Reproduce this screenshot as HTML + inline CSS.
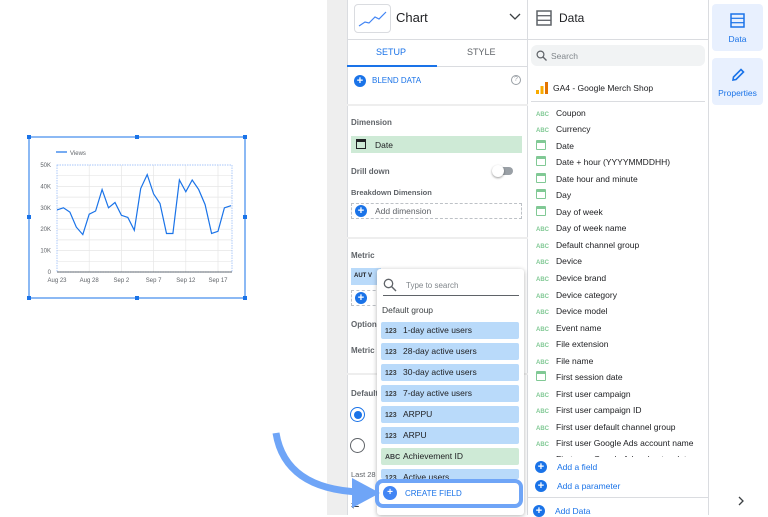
<!DOCTYPE html>
<html><head><meta charset="utf-8"><style>
*{margin:0;padding:0;box-sizing:border-box}
body{width:768px;height:515px;overflow:hidden;background:#fff;font-family:"Liberation Sans",Arial,sans-serif;position:relative;color:#202124}
.a{position:absolute}
.t{font-size:8.5px;color:#202124;white-space:nowrap}
.lbl{font-size:8px;color:#5f6368;font-weight:bold}
.plus{width:12px;height:12px;border-radius:50%;background:#1a73e8;color:#fff;font-size:11px;line-height:12px;text-align:center;font-weight:bold}
.row{position:absolute;left:536px;font-size:8.5px;color:#202124;white-space:nowrap;height:14px;line-height:14px}
.row i{display:inline-block;width:20px;font-style:normal;font-size:6px;color:#81c995;font-weight:bold}
.cal{display:inline-block;width:10px;height:10px;border:1.5px solid #81c995;border-top-width:3px;margin-right:10px;vertical-align:-1px;border-radius:1px}
.mi{position:absolute;left:381px;width:138px;height:17px;background:#b9dafa;border-radius:2px;font-size:8.5px;line-height:17px;white-space:nowrap}
.mi b{display:inline-block;width:22px;padding-left:4px;font-size:7px;color:#3c4043}
</style></head><body>
<!-- gray strip -->
<div class="a" style="left:327px;top:0;width:20px;height:515px;background:#eeeeee"></div>
<!-- chart -->
<svg class="a" style="left:0;top:0" width="327" height="515">
<rect x="29" y="137" width="216" height="161" fill="none" stroke="#1a73e8" stroke-width="1"/>
<g fill="#1a73e8"><rect x="27" y="135" width="4" height="4"/><rect x="135" y="135" width="4" height="4"/><rect x="243" y="135" width="4" height="4"/><rect x="27" y="215" width="4" height="4"/><rect x="243" y="215" width="4" height="4"/><rect x="27" y="296" width="4" height="4"/><rect x="135" y="296" width="4" height="4"/><rect x="243" y="296" width="4" height="4"/></g>
<line x1="56" y1="152" x2="67" y2="152" stroke="#1a73e8" stroke-width="1.2"/>
<text x="70" y="155" font-size="6" fill="#5f6368" font-family="Liberation Sans">Views</text>
<g stroke="#e6e6e6" stroke-width="0.7">
<line x1="57" y1="175.7" x2="232" y2="175.7"/><line x1="57" y1="186.4" x2="232" y2="186.4"/><line x1="57" y1="197.1" x2="232" y2="197.1"/><line x1="57" y1="207.8" x2="232" y2="207.8"/><line x1="57" y1="218.5" x2="232" y2="218.5"/><line x1="57" y1="229.2" x2="232" y2="229.2"/><line x1="57" y1="239.9" x2="232" y2="239.9"/><line x1="57" y1="250.6" x2="232" y2="250.6"/><line x1="57" y1="261.3" x2="232" y2="261.3"/>
<line x1="89.2" y1="165" x2="89.2" y2="272"/><line x1="121.4" y1="165" x2="121.4" y2="272"/><line x1="153.6" y1="165" x2="153.6" y2="272"/><line x1="185.8" y1="165" x2="185.8" y2="272"/><line x1="218" y1="165" x2="218" y2="272"/>
</g>
<rect x="57" y="165" width="175" height="107" fill="none" stroke="#8ab4f8" stroke-width="0.7" stroke-dasharray="1.5 1"/>
<line x1="57" y1="272" x2="232" y2="272" stroke="#3c4043" stroke-width="0.8"/>
<polyline fill="none" stroke="#1a73e8" stroke-width="1.2" points="57,209.9 63.4,207.8 69.9,212.1 76.3,227.1 82.8,234.6 89.2,214.2 95.6,211 102.1,189.6 108.5,207.8 115,202.5 121.4,215.3 127.8,217.4 134.3,230.3 140.7,188.5 147.2,174.6 153.6,193.9 160,203.5 166.5,233.5 172.9,233.5 179.4,180 185.8,191.8 192.2,180 198.7,189.6 205.1,204.6 211.6,233.5 218,231.3 224.4,207.8 231,205.7"/>
<g font-size="6" fill="#5f6368" font-family="Liberation Sans" text-anchor="end">
<text x="51" y="167">50K</text><text x="51" y="188.5">40K</text><text x="51" y="210">30K</text><text x="51" y="231">20K</text><text x="51" y="252.5">10K</text><text x="51" y="274">0</text></g>
<g font-size="6" fill="#5f6368" font-family="Liberation Sans" text-anchor="middle">
<text x="57" y="282">Aug 23</text><text x="89.2" y="282">Aug 28</text><text x="121.4" y="282">Sep 2</text><text x="153.6" y="282">Sep 7</text><text x="185.8" y="282">Sep 12</text><text x="218" y="282">Sep 17</text></g>
</svg>

<!-- chart panel -->
<div class="a" style="left:347px;top:0;width:181px;height:515px;background:#fff;border-left:1px solid #dadce0;border-right:1px solid #dadce0"></div>
<div class="a" style="left:354px;top:4px;width:37px;height:29px;border:1px solid #dadce0;border-radius:4px"></div>
<svg class="a" style="left:357px;top:10px" width="31" height="18"><polyline points="2,16 8,12 12,13 18,7 22,9 29,2" fill="none" stroke="#4285f4" stroke-width="1.2"/></svg>
<div class="a" style="left:396px;top:10px;font-size:13px">Chart</div>
<svg class="a" style="left:509px;top:13px" width="12" height="8"><polyline points="1,1 6,6 11,1" fill="none" stroke="#3c4043" stroke-width="1.3"/></svg>
<div class="a" style="left:347px;top:39px;width:181px;height:1px;background:#dadce0"></div>
<div class="a" style="left:376px;top:47px;font-size:9px;color:#1a73e8">SETUP</div>
<div class="a" style="left:467px;top:47px;font-size:9px;color:#5f6368">STYLE</div>
<div class="a" style="left:347px;top:65px;width:90px;height:2px;background:#1a73e8"></div>
<div class="a" style="left:437px;top:66px;width:90px;height:1px;background:#dadce0"></div>
<div class="a plus" style="left:354px;top:75px">+</div>
<div class="a" style="left:372px;top:76px;font-size:8px;color:#1a73e8">BLEND DATA</div>
<div class="a" style="left:511px;top:75px;width:10px;height:10px;border:1px solid #9aa0a6;border-radius:50%;font-size:7px;line-height:8px;text-align:center;color:#9aa0a6">?</div>
<div class="a" style="left:347px;top:104px;width:181px;height:2px;background:#eee"></div>
<div class="a lbl" style="left:351px;top:118px">Dimension</div>
<div class="a" style="left:351px;top:136px;width:171px;height:17px;background:#ceead6"></div>
<div class="a" style="left:356px;top:139px;width:10px;height:10px;border:1.5px solid #202124;border-top-width:3px"></div>
<div class="a t" style="left:375px;top:140px">Date</div>
<div class="a lbl" style="left:351px;top:167px">Drill down</div>
<div class="a" style="left:495px;top:167px;width:18px;height:8px;border-radius:4px;background:#9aa0a6"></div>
<div class="a" style="left:492px;top:165px;width:12px;height:12px;border-radius:50%;background:#fff;box-shadow:0 1px 2px rgba(0,0,0,.4)"></div>
<div class="a lbl" style="left:351px;top:188px;font-size:7.5px">Breakdown Dimension</div>
<div class="a" style="left:351px;top:203px;width:171px;height:16px;border:1px dashed #bdc1c6"></div>
<div class="a plus" style="left:355px;top:205px">+</div>
<div class="a t" style="left:375px;top:206px;color:#5f6368">Add dimension</div>
<div class="a" style="left:347px;top:237px;width:181px;height:2px;background:#eee"></div>
<div class="a lbl" style="left:351px;top:251px">Metric</div>
<div class="a" style="left:351px;top:268px;width:30px;height:17px;background:#b9dafa;font-size:6px;font-weight:bold;line-height:17px;padding-left:3px">AUT V</div>
<div class="a" style="left:351px;top:290px;width:30px;height:16px;border:1px dashed #bdc1c6"></div>
<div class="a plus" style="left:355px;top:292px">+</div>
<div class="a lbl" style="left:351px;top:320px">Optiona</div>
<div class="a lbl" style="left:351px;top:346px">Metric s</div>
<div class="a" style="left:347px;top:373px;width:181px;height:2px;background:#eee"></div>
<div class="a lbl" style="left:351px;top:389px">Default</div>
<div class="a" style="left:350px;top:407px;width:15px;height:15px;border:1.5px solid #1a73e8;border-radius:50%"></div>
<div class="a" style="left:353.5px;top:410.5px;width:8px;height:8px;background:#1a73e8;border-radius:50%"></div>
<div class="a" style="left:350px;top:438px;width:15px;height:15px;border:1.5px solid #5f6368;border-radius:50%"></div>
<div class="a" style="left:351px;top:470px;font-size:7.5px;color:#5f6368">Last 28</div>
<div class="a" style="left:351px;top:500px;font-size:10px;color:#3c4043">⇄</div>

<!-- dropdown -->
<div class="a" style="left:377px;top:269px;width:147px;height:246px;background:#fff;box-shadow:0 1px 5px rgba(0,0,0,.3);border-radius:3px"></div>
<svg class="a" style="left:383px;top:278px" width="14" height="14"><circle cx="5.5" cy="5.5" r="4.2" fill="none" stroke="#5f6368" stroke-width="1.3"/><line x1="8.5" y1="8.5" x2="13" y2="13" stroke="#5f6368" stroke-width="1.4"/></svg>
<div class="a" style="left:406px;top:281px;font-size:8px;color:#80868b">Type to search</div>
<div class="a" style="left:383px;top:295px;width:136px;height:1px;background:#5f6368"></div>
<div class="a t" style="left:382px;top:305px;color:#3c4043">Default group</div>
<div class="mi" style="top:322px"><b>123</b>1-day active users</div>
<div class="mi" style="top:343px"><b>123</b>28-day active users</div>
<div class="mi" style="top:364px"><b>123</b>30-day active users</div>
<div class="mi" style="top:385px"><b>123</b>7-day active users</div>
<div class="mi" style="top:406px"><b>123</b>ARPPU</div>
<div class="mi" style="top:427px"><b>123</b>ARPU</div>
<div class="mi" style="top:448px;background:#ceead6"><b>ABC</b>Achievement ID</div>
<div class="mi" style="top:469px;height:10px;overflow:hidden"><b>123</b>Active users</div>
<div class="a" style="left:375px;top:479px;width:148px;height:29px;border:4px solid #6fa5f7;border-radius:8px;background:#fff"></div>
<div class="a" style="left:383px;top:486px;width:14px;height:14px;border-radius:50%;background:#4285f4;color:#fff;font-size:10px;line-height:14px;text-align:center;font-weight:bold">+</div>
<div class="a" style="left:405px;top:489px;font-size:8px;color:#1a73e8">CREATE FIELD</div>
<!-- arrow -->
<svg class="a" style="left:260px;top:420px" width="125" height="95"><path d="M16,13 C22,50 50,70 100,72" fill="none" stroke="#6fa5f7" stroke-width="7"/><polygon points="92,58 120,73 92,88" fill="#6fa5f7"/></svg>

<!-- data panel -->
<svg class="a" style="left:536px;top:10px" width="16" height="16"><rect x="1" y="1" width="14" height="14" fill="none" stroke="#5f6368" stroke-width="1.5"/><line x1="1" y1="5.7" x2="15" y2="5.7" stroke="#5f6368" stroke-width="1.3"/><line x1="1" y1="10.3" x2="15" y2="10.3" stroke="#5f6368" stroke-width="1.3"/></svg>
<div class="a" style="left:559px;top:11px;font-size:12px">Data</div>
<div class="a" style="left:528px;top:39px;width:180px;height:1px;background:#dadce0"></div>
<div class="a" style="left:531px;top:45px;width:174px;height:21px;background:#f1f3f4;border-radius:6px"></div>
<svg class="a" style="left:536px;top:50px" width="11" height="11"><circle cx="4.5" cy="4.5" r="3.4" fill="none" stroke="#5f6368" stroke-width="1.2"/><line x1="7" y1="7" x2="10.5" y2="10.5" stroke="#5f6368" stroke-width="1.3"/></svg>
<div class="a" style="left:551px;top:51px;font-size:8.5px;color:#80868b">Search</div>
<svg class="a" style="left:535px;top:81px" width="14" height="14"><rect x="1" y="9" width="3" height="4" fill="#f9ab00"/><rect x="5.5" y="5" width="3" height="8" fill="#f9ab00"/><rect x="10" y="1" width="3" height="12" fill="#e37400"/></svg>
<div class="a t" style="left:553px;top:83px">GA4 - Google Merch Shop</div>
<div class="a" style="left:531px;top:101px;width:174px;height:1px;background:#dadce0"></div>
<div class="row" style="top:106px"><i>ABC</i>Coupon</div>
<div class="row" style="top:122px"><i>ABC</i>Currency</div>
<div class="row" style="top:139px"><span class="cal"></span>Date</div>
<div class="row" style="top:155px"><span class="cal"></span>Date + hour (YYYYMMDDHH)</div>
<div class="row" style="top:172px"><span class="cal"></span>Date hour and minute</div>
<div class="row" style="top:188px"><span class="cal"></span>Day</div>
<div class="row" style="top:205px"><span class="cal"></span>Day of week</div>
<div class="row" style="top:221px"><i>ABC</i>Day of week name</div>
<div class="row" style="top:238px"><i>ABC</i>Default channel group</div>
<div class="row" style="top:254px"><i>ABC</i>Device</div>
<div class="row" style="top:271px"><i>ABC</i>Device brand</div>
<div class="row" style="top:288px"><i>ABC</i>Device category</div>
<div class="row" style="top:304px"><i>ABC</i>Device model</div>
<div class="row" style="top:321px"><i>ABC</i>Event name</div>
<div class="row" style="top:337px"><i>ABC</i>File extension</div>
<div class="row" style="top:354px"><i>ABC</i>File name</div>
<div class="row" style="top:370px"><span class="cal"></span>First session date</div>
<div class="row" style="top:387px"><i>ABC</i>First user campaign</div>
<div class="row" style="top:403px"><i>ABC</i>First user campaign ID</div>
<div class="row" style="top:420px"><i>ABC</i>First user default channel group</div>
<div class="row" style="top:436px"><i>ABC</i>First user Google Ads account name</div>
<div class="row" style="top:452px;height:5px;overflow:hidden"><i>ABC</i>First user Google Ads ad network type</div>
<div class="a plus" style="left:535px;top:461px">+</div>
<div class="a" style="left:557px;top:462px;font-size:8.5px;color:#1a73e8">Add a field</div>
<div class="a plus" style="left:535px;top:480px">+</div>
<div class="a" style="left:557px;top:481px;font-size:8.5px;color:#1a73e8">Add a parameter</div>
<div class="a" style="left:528px;top:497px;width:180px;height:1px;background:#dadce0"></div>
<div class="a plus" style="left:533px;top:505px">+</div>
<div class="a" style="left:555px;top:506px;font-size:8.5px;color:#1a73e8">Add Data</div>

<!-- right sidebar -->
<div class="a" style="left:708px;top:0;width:1px;height:515px;background:#dadce0"></div>
<div class="a" style="left:712px;top:4px;width:51px;height:47px;background:#e8f0fe;border-radius:4px"></div>
<svg class="a" style="left:730px;top:13px" width="15" height="15"><rect x="1" y="1" width="13" height="13" fill="none" stroke="#1a73e8" stroke-width="1.5"/><line x1="1" y1="5.3" x2="14" y2="5.3" stroke="#1a73e8" stroke-width="1.2"/><line x1="1" y1="9.7" x2="14" y2="9.7" stroke="#1a73e8" stroke-width="1.2"/></svg>
<div class="a" style="left:712px;top:34px;width:51px;text-align:center;font-size:8.5px;color:#1a73e8">Data</div>
<div class="a" style="left:712px;top:58px;width:51px;height:47px;background:#e8f0fe;border-radius:4px"></div>
<svg class="a" style="left:731px;top:68px" width="14" height="14"><path d="M2,12 L2.5,9 L10,1.5 L12.5,4 L5,11.5 Z" fill="none" stroke="#1a73e8" stroke-width="1.6"/></svg>
<div class="a" style="left:712px;top:88px;width:51px;text-align:center;font-size:8.5px;color:#1a73e8">Properties</div>
<svg class="a" style="left:737px;top:496px" width="8" height="10"><polyline points="2,1 6,5 2,9" fill="none" stroke="#3c4043" stroke-width="1.3"/></svg>
</body></html>
